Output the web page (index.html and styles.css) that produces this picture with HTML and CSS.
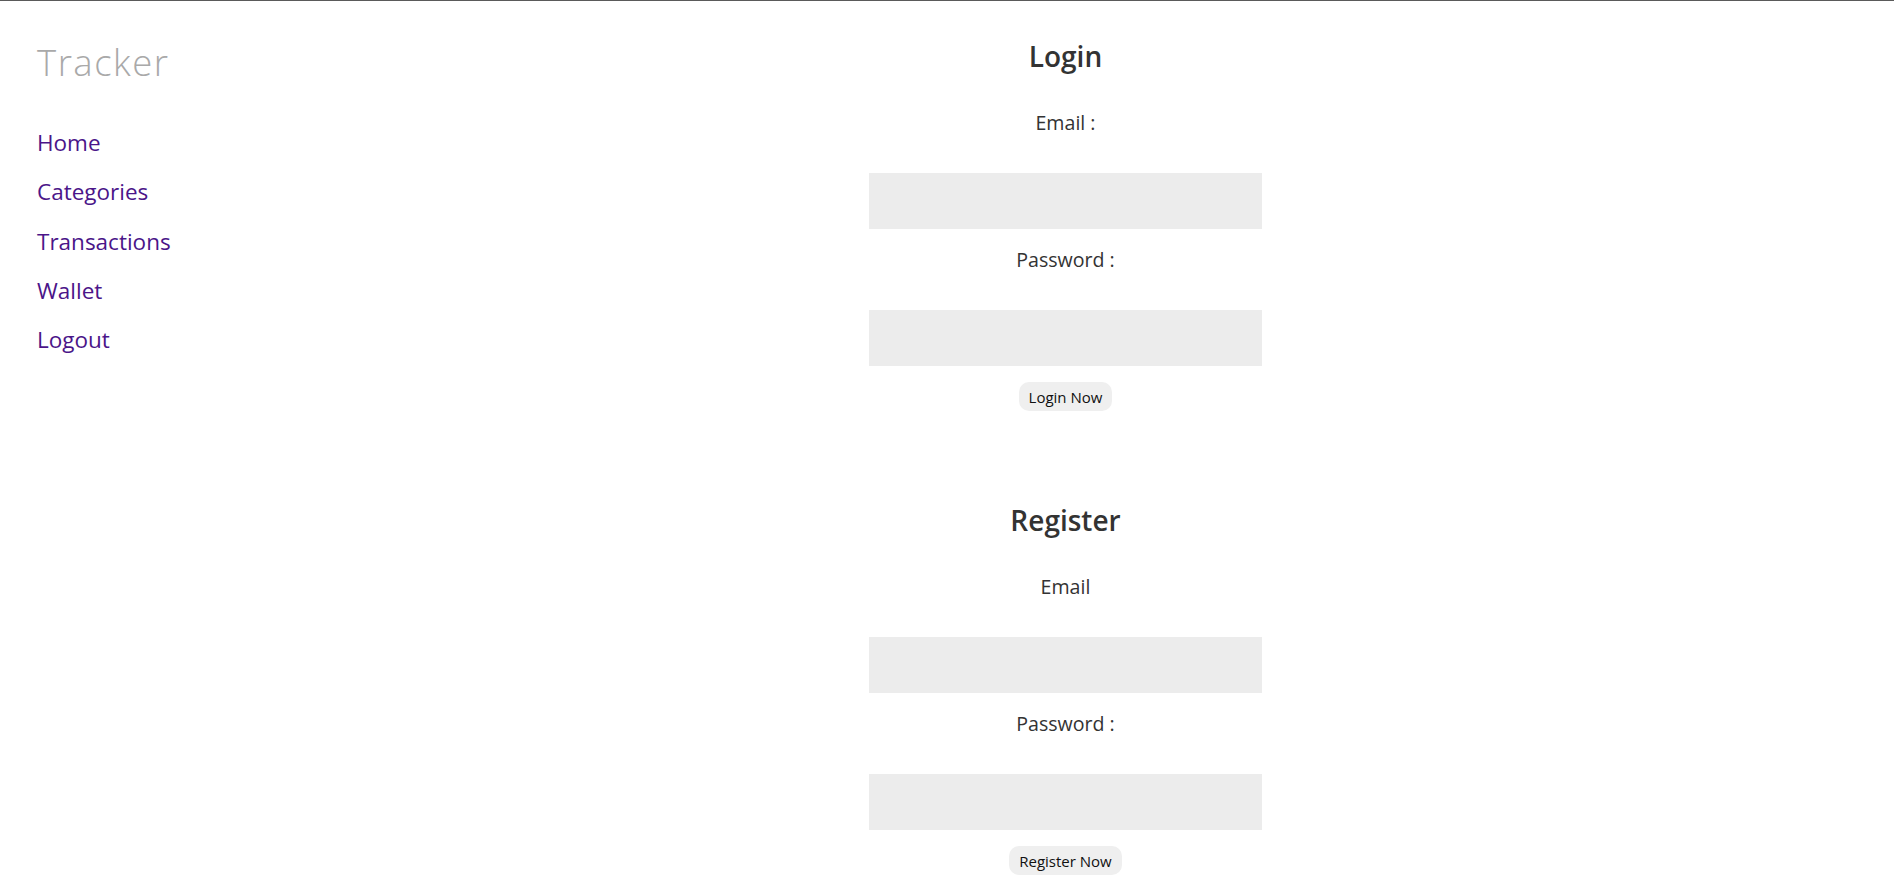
FILE: index.html
```html
<!DOCTYPE html>
<html lang="en">
<head>
<meta charset="utf-8">
<title>Tracker</title>
<link rel="stylesheet" href="styles.css">
</head>
<body>
<div class="layout">
  <aside class="sidebar">
    <div class="brand">Tracker</div>
    <nav class="nav">
      <a href="#" class="nav-link">Home</a>
      <a href="#" class="nav-link">Categories</a>
      <a href="#" class="nav-link">Transactions</a>
      <a href="#" class="nav-link">Wallet</a>
      <a href="#" class="nav-link">Logout</a>
    </nav>
  </aside>
  <main class="main">
    <form class="auth-form">
      <h2 class="form-title">Login</h2>
      <label class="field-label">Email :</label>
      <input class="field-input" type="email">
      <label class="field-label">Password :</label>
      <input class="field-input" type="password">
      <button class="btn" type="button">Login Now</button>
    </form>
    <form class="auth-form">
      <h2 class="form-title">Register</h2>
      <label class="field-label">Email</label>
      <input class="field-input" type="email">
      <label class="field-label">Password :</label>
      <input class="field-input" type="password">
      <button class="btn" type="button">Register Now</button>
    </form>
  </main>
</div>
</body>
</html>
```
FILE: styles.css
```css
* { box-sizing: border-box; }
html, body {
  margin: 0;
  padding: 0;
  background: #fff;
}
body {
  border-top: 1px solid #5a5a5a;
  font-family: "Open Sans", "Liberation Sans", sans-serif;
  color: #333;
}
.layout {
  display: flex;
  align-items: flex-start;
}
.sidebar {
  flex: 0 0 237px;
  padding-left: 37px;
  padding-top: 35px;
}
.brand {
  font-size: 36.5px;
  line-height: 52px;
  font-weight: 300;
  letter-spacing: 1.5px;
  color: #a9a9a9;
}
.nav {
  display: flex;
  flex-direction: column;
  margin-top: 30px;
}
.nav-link {
  font-size: 22.5px;
  line-height: 49.3px;
  color: #4b1589;
  text-decoration: none;
  font-weight: 500;
}
.main {
  flex: 1;
  display: flex;
  flex-direction: column;
  align-items: center;
  gap: 89.5px;
  padding-top: 35px;
}
.auth-form {
  width: 393px;
  display: flex;
  flex-direction: column;
  align-items: center;
  margin: 0;
}
.form-title {
  margin: 0;
  font-size: 28px;
  line-height: 40px;
  font-weight: 600;
  color: #333;
  margin-bottom: 33px;
}
.field-label {
  font-size: 19.6px;
  line-height: 28px;
  color: #333;
  margin-bottom: 36px;
}
.field-input {
  display: block;
  width: 393px;
  height: 55.7px;
  border: none;
  background: #ececec;
  margin: 0 0 17.6px;
  outline: none;
}
.btn {
  margin-top: -2px;
  font-family: "Open Sans", "Liberation Sans", sans-serif;
  font-size: 15px;
  line-height: 20px;
  color: #111;
  background: #efefef;
  border: none;
  border-radius: 10px;
  padding: 5px 10px 4px;
}
```
